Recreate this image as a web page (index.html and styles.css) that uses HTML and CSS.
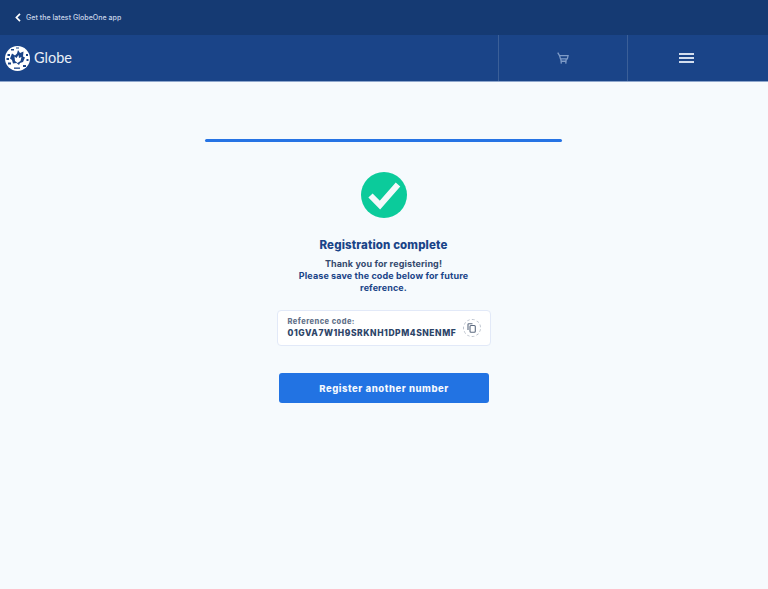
FILE: index.html
```html
<!DOCTYPE html>
<html lang="en">
<head>
<meta charset="utf-8">
<title>Registration complete</title>
<link rel="stylesheet" href="styles.css">
</head>
<body>
<div class="promo">
  <svg class="chev" width="6" height="9" viewBox="0 0 6 9"><path d="M5 .8 1.400 4.500 5 8.200" fill="none" stroke="#fff" stroke-width="1.700"/></svg>
  <span>Get the latest GlobeOne app</span>
</div>
<header class="nav">
  <div class="brand">
    <svg class="logo" width="25" height="25" viewBox="0 0 25 25">
      <circle cx="12.500" cy="12.500" r="12.500" fill="#fff"/>
      <g fill="#1a4488">
        <path d="M7 7.500 10 9.500l2-2 1-3.500 2 3 3.500-1.500-.5 5 2 1-2 4.500-3 1-1 2-2.500-2-3.500.5-1-3.500-2-1.500z"/>
        <rect x="2.500" y="8" width="2.500" height="2"/><rect x="1.500" y="12" width="2.500" height="2"/><rect x="3" y="16.500" width="3" height="2"/>
        <rect x="21" y="8" width="2" height="2"/><rect x="21.500" y="13" width="2" height="2"/><rect x="18" y="19" width="3" height="2"/>
        <rect x="9" y="21.500" width="6" height="1.300"/><rect x="6" y="3" width="3" height="1.500"/><rect x="11" y="1.500" width="3" height="1"/>
      </g>
      <path d="M9.500 10.500l2 1.500 2-3 .5 3 2.500-1-1 4-3 2-2.500-2z" fill="#fff"/>
    </svg>
    <span class="wordmark">Globe</span>
  </div>
  <div class="nav-cell cart">
    <svg width="12" height="13" viewBox="0 0 13 14" fill="none" stroke="#7f9cc8" stroke-width="1.400"><path d="M.8.600 2.700 3.800h9.300l-.8 3.700H3.800L2.700 3.800"/><path d="M4.200 7.500l.5 5M10 7.500l-.5 5M4.500 10h5.200"/></svg>
  </div>
  <div class="nav-cell menu">
    <span class="burger"><i></i><i></i><i></i></span>
  </div>
</header>
<main class="content">
  <div class="progress"></div>
  <svg class="check" width="46" height="46" viewBox="0 0 46 46">
    <circle cx="23" cy="23" r="23" fill="#0bcb9b"/>
    <path d="M9.500 23.500 19 33 37 12.500" fill="none" stroke="#f4f9fb" stroke-width="6"/>
  </svg>
  <h1 class="title">Registration complete</h1>
  <p class="message"><span class="thanks">Thank you for registering!</span><br>Please save the code below for future reference.</p>
  <div class="code-card">
    <div class="code-text">
      <div class="code-label">Reference code:</div>
      <div class="code-value">01GVA7W1H9SRKNH1DPM4SNENMF</div>
    </div>
    <span class="copy">
      <svg width="9" height="10" viewBox="0 0 9 10" fill="none" stroke="#5d6b80" stroke-width="1.100"><rect x="3" y="2.500" width="5.300" height="6.800" rx="1"/><path d="M1 7V1.500C1 1 1.300.7 1.800.7H5.500"/></svg>
    </span>
  </div>
  <button class="action" type="button">Register another number</button>
</main>
</body>
</html>
```
FILE: styles.css
```css
* { box-sizing: border-box; }
html, body { margin: 0; height: 100%; }
body {
  background: #f6fafd;
  font-family: "Inter", "Liberation Sans", sans-serif;
  color: #1a4488;
  overflow: hidden;
}
.promo {
  height: 35px;
  background: #153a73;
  color: #c9d5e8;
  display: flex;
  align-items: center;
  gap: 5px;
  padding-left: 15px;
  font-family: "Inter", sans-serif;
  font-size: 7px;
  font-weight: 500;
  letter-spacing: .04px;
}
.nav {
  height: 47px;
  background: #1a4488;
  display: flex;
  align-items: stretch;
  border-bottom: 1px solid #8ea6cc;
}
.brand {
  flex: 1;
  display: flex;
  align-items: center;
  gap: 4px;
  padding-left: 5px;
}
.wordmark {
  color: #e9eef6;
  font-family: "Lato", sans-serif;
  font-size: 14.500px;
  line-height: 1;
}
.nav-cell {
  display: flex;
  align-items: center;
  justify-content: center;
  border-left: 1px solid #3b5f98;
}
.cart { width: 129px; padding-right: 1px; }
.menu { width: 141px; padding: 0 23px 1px 0; }
.burger { display: flex; flex-direction: column; gap: 2px; width: 15px; }
.burger i { display: block; height: 2px; background: #d3deee; }
.content {
  width: 357px;
  margin: 0 auto 0 205px;
  display: flex;
  flex-direction: column;
  align-items: center;
  padding-top: 57px;
}
.progress {
  width: 100%;
  height: 3px;
  background: #2673e4;
  border-radius: 2px;
}
.check { margin-top: 30px; display: block; }
.title {
  margin: 20px 0 0;
  font-family: "Inter", sans-serif;
  font-size: 11.500px;
  line-height: 15px;
  font-weight: 800;
  letter-spacing: .13px;
  color: #1a4488;
}
.message {
  width: 190px;
  margin: 5px 0 0;
  text-align: center;
  font-family: "Inter", sans-serif;
  font-size: 9px;
  line-height: 12px;
  font-weight: 700;
  letter-spacing: .12px;
  color: #1a4488;
}
.thanks { color: #34496e; }
.code-card {
  width: 214px;
  height: 36px;
  margin-top: 16px;
  background: #fff;
  border: 1px solid #e2e9f8;
  border-radius: 4px;
  display: flex;
  align-items: center;
  justify-content: space-between;
  padding: 0 9px 0 10px;
}
.code-label {
  font-family: "Inter", sans-serif;
  font-size: 7.500px;
  line-height: 9px;
  font-weight: 800;
  letter-spacing: .45px;
  color: #63728a;
}
.code-value {
  margin-top: 1px;
  font-family: "Inter", sans-serif;
  font-size: 8.500px;
  line-height: 12px;
  font-weight: 800;
  letter-spacing: .55px;
  color: #2d4468;
  white-space: nowrap;
}
.copy {
  width: 18px;
  height: 18px;
  flex: none;
  border-radius: 50%;
  border: 1px dashed #b8bfca;
  display: flex;
  align-items: center;
  justify-content: center;
}
.action {
  width: 210px;
  height: 30px;
  margin-top: 27px;
  margin-left: 1px;
  border: 0;
  border-radius: 3px;
  background: #2273e3;
  color: #f4f8fe;
  font-family: "Inter", sans-serif;
  font-size: 9.500px;
  font-weight: 800;
  letter-spacing: .55px;
}
```
